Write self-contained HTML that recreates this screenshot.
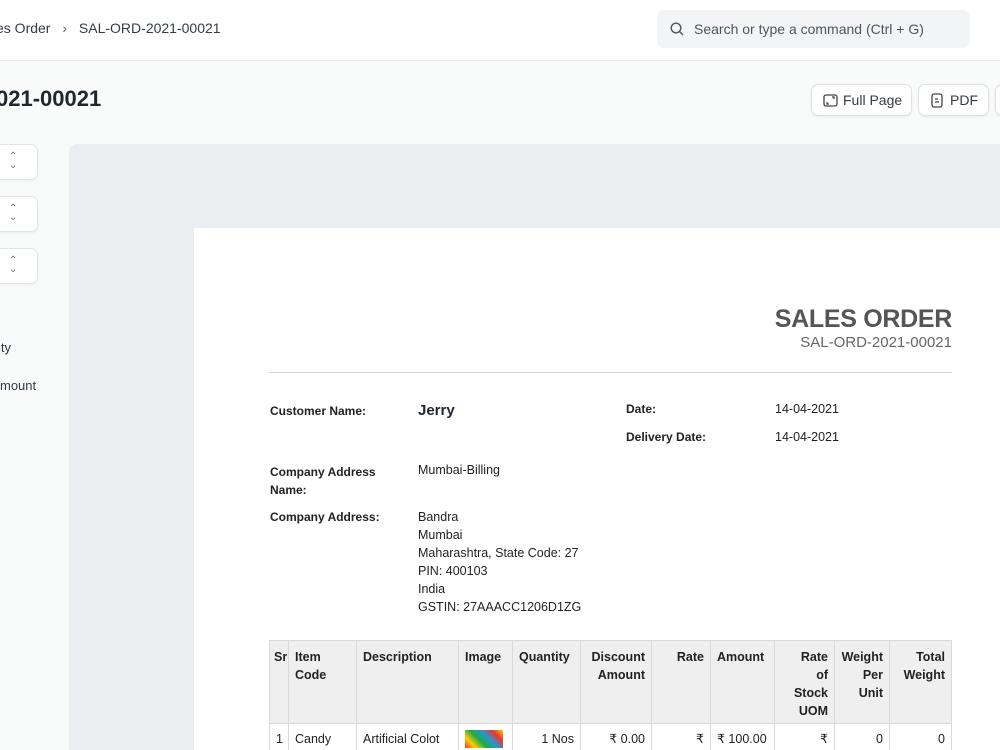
<!DOCTYPE html>
<html><head><meta charset="utf-8"><style>
*{box-sizing:border-box;margin:0;padding:0}
html,body{width:1000px;height:750px;overflow:hidden}
body{background:#f9fafa;font-family:"Liberation Sans",sans-serif;color:#1f272e;position:relative}
.nav{position:absolute;left:0;top:0;width:1000px;height:61px;background:#fff;border-bottom:1px solid #e6e8ea}
.abs{position:absolute;white-space:nowrap}
.search{position:absolute;left:657px;top:10px;width:313px;height:38px;background:#f3f4f6;border-radius:7px}
.btn{position:absolute;top:84px;height:32px;background:#fff;border:1px solid #dfe2e5;border-radius:7px;box-shadow:0 1px 2px rgba(0,0,0,.06);font-size:14px;color:#333c44;padding:7px 0 0 31px;white-space:nowrap}
.sel{position:absolute;left:-10px;width:48px;height:36px;background:#fff;border:1px solid #e2e4e7;border-radius:7px;box-shadow:0 1px 2px rgba(0,0,0,.05)}
.sel span{position:absolute;left:18px;top:7px;font-size:10px;color:#777;line-height:9px;text-align:center}
.gray{position:absolute;left:69px;top:144px;width:940px;height:620px;background:#ebeef0;border-radius:8px 0 0 0}
.page{position:absolute;left:194px;top:228px;width:820px;height:530px;background:#fff}
.l{font-size:12px;font-weight:bold;color:#222}
.v{font-size:12.5px;color:#222}
table{position:absolute;left:269px;top:640px;width:682px;table-layout:fixed;border-collapse:collapse;font-size:12.5px;color:#222}
td,th{border:1px solid #d7dadd;padding:6px 6px;vertical-align:top;line-height:18px;overflow:hidden;white-space:nowrap}
th{background:#efefef;font-weight:bold;text-align:left;white-space:normal;padding:7px 6px 3px}
.r{text-align:right}
</style></head><body>
<div class="nav"></div>
<div class="abs" style="left:-4px;top:20px;font-size:14px;color:#333c44">es Order <span style="color:#666;margin:0 8px 0 8px">›</span> SAL-ORD-2021-00021</div>
<div class="search"><svg style="position:absolute;left:13px;top:12px" width="14" height="14" viewBox="0 0 14 14" fill="none" stroke="#555" stroke-width="1.4"><circle cx="6" cy="6" r="4.8"/><path d="M9.5 9.5L13 13"/></svg><span class="abs" style="left:37px;top:11px;font-size:14px;color:#4c5761">Search or type a command (Ctrl + G)</span></div>
<div class="abs" style="left:-4px;top:86px;font-size:22px;font-weight:bold;color:#1f272e">021-00021</div>
<div class="btn" style="left:811px;width:101px"><svg style="position:absolute;left:11px;top:9px" width="15" height="13" viewBox="0 0 15 13" fill="none" stroke="#444" stroke-width="1.3"><rect x="1" y="1" width="13" height="11" rx="2"/><path d="M4 8v2h2M11 5V3H9"/></svg>Full Page</div>
<div class="btn" style="left:918px;width:71px"><svg style="position:absolute;left:12px;top:8px" width="12" height="15" viewBox="0 0 12 15" fill="none" stroke="#444" stroke-width="1.3"><rect x="1" y="1" width="10" height="13" rx="2"/><path d="M4 6h3M4 9h4"/></svg>PDF</div>
<div class="btn" style="left:995px;width:20px;padding:0"></div>
<div class="sel" style="top:144px"><span>⌃<br>⌄</span></div>
<div class="sel" style="top:196px"><span>⌃<br>⌄</span></div>
<div class="sel" style="top:248px"><span>⌃<br>⌄</span></div>
<div class="abs" style="left:-2px;top:340px;font-size:13px;color:#333c44">ity</div>
<div class="abs" style="left:0;top:378px;font-size:13px;color:#333c44">mount</div>
<div class="gray"></div>
<div class="page"></div>
<div class="abs" style="right:48px;top:305px;font-size:25px;color:#555;font-weight:bold;letter-spacing:-0.3px">SALES ORDER</div>
<div class="abs" style="right:48px;top:334px;font-size:15px;color:#666">SAL-ORD-2021-00021</div>
<div class="abs" style="left:269px;top:372px;width:683px;height:1px;background:#d1d8dd"></div>
<div class="abs l" style="left:270px;top:404px">Customer Name:</div>
<div class="abs" style="left:418px;top:402px;font-size:15px;font-weight:bold">Jerry</div>
<div class="abs l" style="left:626px;top:402px">Date:</div>
<div class="abs v" style="left:775px;top:402px">14-04-2021</div>
<div class="abs l" style="left:626px;top:430px">Delivery Date:</div>
<div class="abs v" style="left:775px;top:430px">14-04-2021</div>
<div class="abs l" style="left:270px;top:463px;line-height:18px">Company Address<br>Name:</div>
<div class="abs v" style="left:418px;top:463px">Mumbai-Billing</div>
<div class="abs l" style="left:270px;top:510px">Company Address:</div>
<div class="abs v" style="left:418px;top:508px;line-height:18px">Bandra<br>Mumbai<br>Maharashtra, State Code: 27<br>PIN: 400103<br>India<br>GSTIN: 27AAACC1206D1ZG</div>
<table>
<colgroup><col style="width:19px"><col style="width:68px"><col style="width:102px"><col style="width:54px"><col style="width:68px"><col style="width:71px"><col style="width:59px"><col style="width:64px"><col style="width:60px"><col style="width:55px"><col style="width:62px"></colgroup>
<tr><th style="padding-left:4px;padding-right:2px">Sr</th><th>Item<br>Code</th><th>Description</th><th>Image</th><th>Quantity</th><th class="r">Discount<br>Amount</th><th class="r">Rate</th><th>Amount</th><th class="r">Rate<br>of<br>Stock<br>UOM</th><th class="r">Weight<br>Per<br>Unit</th><th class="r">Total<br>Weight</th></tr>
<tr><td style="padding-left:6px;padding-right:2px">1</td><td>Candy</td><td>Artificial Colot</td><td><div style="width:38px;height:18px;background:linear-gradient(45deg,#e33,#fc0,#2a4,#29c,#e33,#fc0)"></div></td><td class="r">1 Nos</td><td class="r">₹ 0.00</td><td class="r">₹</td><td>₹ 100.00</td><td class="r">₹</td><td class="r">0</td><td class="r">0</td></tr>
</table>
</body></html>
